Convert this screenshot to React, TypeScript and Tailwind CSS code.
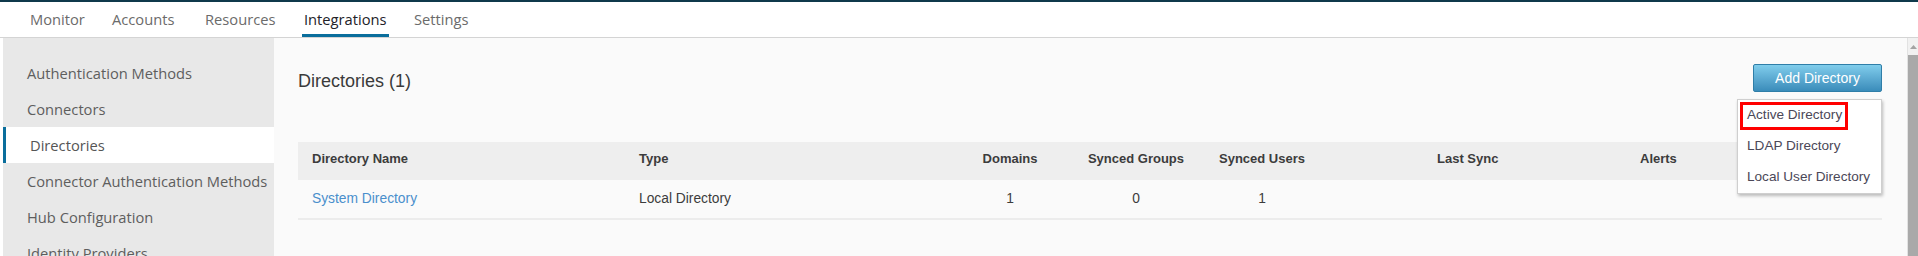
const NAV_TABS = [
  { label: 'Monitor', w: 'w-[82px]' },
  { label: 'Accounts', w: 'w-[93px]' },
  { label: 'Resources', w: 'w-[99px]' },
  { label: 'Integrations', w: 'w-[110px]', active: true },
  { label: 'Settings', w: 'w-auto' },
];

const SIDE_ITEMS = [
  'Authentication Methods',
  'Connectors',
  'Directories',
  'Connector Authentication Methods',
  'Hub Configuration',
  'Identity Providers',
];

// grid columns: name, type, domains, groups, users, last sync, alerts
const COLS = 'grid grid-cols-[327px_322px_126px_126px_126px_301px_1fr]';

export default function App() {
  return (
    <div className="w-[1918px] h-[256px] overflow-hidden bg-white flex flex-col">
      <div className="h-[2px] bg-[#0f394b] shrink-0" />

      {/* top nav */}
      <nav className="h-[36px] shrink-0 border-b border-[#d4d4d4] flex pl-[28px] font-['Open_Sans',sans-serif] text-[14.7px]">
        {NAV_TABS.map(t => (
          <div key={t.label} className={`${t.w} h-full flex`}>
            <span
              className={
                t.active
                  ? 'h-full flex items-center px-[2px] pt-[2px] border-b-[3px] border-[#0a6e9c] text-[#222228]'
                  : 'h-full flex items-center px-[2px] text-[#6b6b6b]'
              }
            >
              {t.label}
            </span>
          </div>
        ))}
      </nav>

      <div className="flex-1 flex min-h-0">
        {/* sidebar */}
        <div className="pl-[3px] bg-white shrink-0">
          <div className="w-[271px] h-full bg-[#e8e8e8] pt-[17px] font-['Open_Sans',sans-serif] text-[14.7px] text-[#5e5e5e]">
            {SIDE_ITEMS.map(item =>
              item === 'Directories' ? (
                <div key={item} className="h-[36px] flex items-center bg-white border-l-[3px] border-[#0a6e9c] pl-[24px] text-[#555]">
                  {item}
                </div>
              ) : (
                <div key={item} className="h-[36px] flex items-center pl-[24px] whitespace-nowrap">
                  {item}
                </div>
              )
            )}
          </div>
        </div>

        {/* main content */}
        <main className="relative flex-1 bg-[#fafafa] pl-[24px] pr-[25px] font-['Liberation_Sans',Arial,sans-serif]">
          <div className="pt-[26px] flex justify-between items-start">
            <h1 className="mt-[7px] text-[18px] leading-[21px] text-[#3a3a3a]">Directories (1)</h1>
            <button className="w-[129px] h-[28px] rounded-[2px] border border-[#2f7ea8] bg-linear-to-b from-[#80cdec] to-[#3a8cba] text-white text-[14px] leading-none">
              Add Directory
            </button>
          </div>

          {/* table */}
          <div className="mt-[50px] text-[#3c3c3c]">
            <div className={`${COLS} h-[38px] items-center bg-[#eeeeee] font-bold text-[13px] pb-[4px]`}>
              <div className="pl-[14px]">Directory Name</div>
              <div className="pl-[14px]">Type</div>
              <div className="text-center">Domains</div>
              <div className="text-center">Synced Groups</div>
              <div className="text-center">Synced Users</div>
              <div className="pl-[112px]">Last Sync</div>
              <div className="pl-[14px]">Alerts</div>
            </div>
            <div className={`${COLS} h-[40px] items-center border-b-2 border-[#ececec] text-[13.8px]`}>
              <div className="pl-[14px] text-[#4a8fcc]">System Directory</div>
              <div className="pl-[14px]">Local Directory</div>
              <div className="text-center">1</div>
              <div className="text-center">0</div>
              <div className="text-center">1</div>
              <div />
              <div />
            </div>
          </div>

          {/* dropdown menu */}
          <div className="absolute top-[61px] right-[25px] w-[145px] bg-white border border-[#cfcfcf] shadow-[1px_2px_3px_rgba(0,0,0,0.25)] text-[13.6px] text-[#4b4858]">
            <div className="h-[31px] flex items-center pl-[2px]">
              <span className="h-[28px] flex items-center border-[3px] border-[#ff0000] pl-[4px] pr-[3px]">Active Directory</span>
            </div>
            <div className="h-[31px] flex items-center pl-[9px]">LDAP Directory</div>
            <div className="h-[31px] flex items-center pl-[9px]">Local User Directory</div>
          </div>
        </main>

        {/* scrollbar */}
        <div className="w-[11px] shrink-0 flex flex-col bg-[#f1f1f1] border-l border-[#e2e2e2]">
          <div className="h-[17px] flex items-center justify-center">
            <svg width="7" height="4" viewBox="0 0 7 4">
              <path d="M0 4 L3.5 0 L7 4 Z" fill="#a3a3a3" />
            </svg>
          </div>
          <div className="flex-1 bg-[#a9a9a9]" />
        </div>
      </div>
    </div>
  );
}
